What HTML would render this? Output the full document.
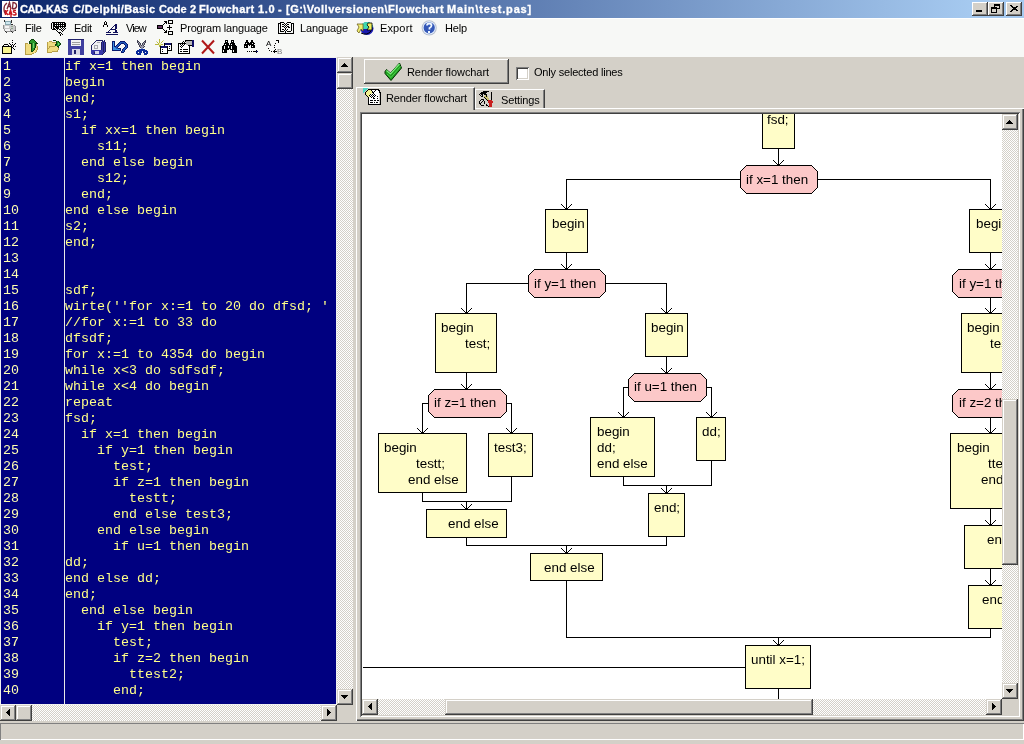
<!DOCTYPE html>
<html><head><meta charset="utf-8"><style>
*{margin:0;padding:0;box-sizing:border-box}
html,body{width:1024px;height:744px;overflow:hidden;background:#D4D0C8;font-family:"Liberation Sans",sans-serif;position:relative}
.a{position:absolute}
#title{left:0;top:0;width:1024px;height:18px;background:linear-gradient(to right,#0A246A 0px,#A6CAF0 975px)}
.tt{top:2px;color:#fff;font-weight:bold;font-size:11px;will-change:transform;-webkit-text-stroke:0.3px #fff;white-space:pre;line-height:14px}
.wbtn{top:2px;width:16px;height:14px;background:#D4D0C8;box-shadow:inset -1px -1px #404040,inset 1px 1px #fff,inset -2px -2px #808080,inset 2px 2px #D4D0C8}
#menubar{left:0;top:18px;width:1024px;height:39px;background:#F7F8F6;border-top:1px solid #fff}
.mt{top:22px;font-size:11px;line-height:13px;color:#000;white-space:pre;will-change:transform}
.lbl{font-size:11px;line-height:13px;color:#000;white-space:pre;will-change:transform}
#editor{left:1px;top:58px;width:335px;height:646px;background:#000080;overflow:hidden;will-change:transform}
#gutline{left:63px;top:0;width:1px;height:646px;background:#E8E8E8}
.code{font-family:"Liberation Mono",monospace;font-size:13.333px;line-height:16px;white-space:pre}
#nums{left:2px;top:1px;color:#FFFFB0}
#lines{left:64px;top:1px;color:#FFFF88}
.track{background-color:#D4D0C8;background-image:repeating-conic-gradient(#fff 0 25%,#D4D0C8 0 50%);background-size:2px 2px}
.sbtn{width:16px;height:16px;background:#D4D0C8;box-shadow:inset -1px -1px #404040,inset 1px 1px #D4D0C8,inset -2px -2px #808080,inset 2px 2px #fff}
#status{left:0;top:723px;width:1024px;height:17px;box-shadow:inset 1px 1px #808080,inset -1px -1px #fff}
</style></head><body>
<div id="title" class="a"></div>
<div class="a tt" style="left:20.0px;letter-spacing:-0.383px">CAD-KAS</div>
<div class="a tt" style="left:72.9px;letter-spacing:0.385px">C/Delphi/Basic</div>
<div class="a tt" style="left:158.7px;letter-spacing:0.033px">Code</div>
<div class="a tt" style="left:189.7px;letter-spacing:0.3px">2</div>
<div class="a tt" style="left:199.0px;letter-spacing:0.387px">Flowchart</div>
<div class="a tt" style="left:257.7px;letter-spacing:0.65px">1.0</div>
<div class="a tt" style="left:277.8px;letter-spacing:1.1px">-</div>
<div class="a tt" style="left:286.0px;letter-spacing:0.481px">[G:\Vollversionen\Flowchart</div>
<div class="a tt" style="left:446.9px;letter-spacing:0.838px">Main\test.pas]</div>
<div class="a wbtn" style="left:972px"><svg class="a" style="left:4px;top:8px;will-change:transform" width="6" height="2" viewBox="0 0 6 2" shape-rendering="crispEdges"><rect x="0" y="0" width="6" height="2" fill="#000"/></svg></div>
<div class="a wbtn" style="left:988px"><svg class="a" style="left:3px;top:2px;will-change:transform" width="9" height="9" viewBox="0 0 9 9" shape-rendering="crispEdges"><rect x="3" y="0" width="6" height="1" fill="#000"/><rect x="3" y="1" width="6" height="1" fill="#000"/><rect x="3" y="0" width="1" height="5" fill="#000"/><rect x="8" y="0" width="1" height="5" fill="#000"/><rect x="6" y="4" width="3" height="1" fill="#000"/><rect x="0" y="3" width="6" height="1" fill="#000"/><rect x="0" y="4" width="6" height="1" fill="#000"/><rect x="0" y="3" width="1" height="6" fill="#000"/><rect x="5" y="3" width="1" height="6" fill="#000"/><rect x="0" y="8" width="6" height="1" fill="#000"/></svg></div>
<div class="a wbtn" style="left:1006px"><svg class="a" style="left:4px;top:3px;will-change:transform" width="9" height="7" viewBox="0 0 9 7" shape-rendering="crispEdges"><path d="M0.5 0.5 L7.5 6.5 M7.5 0.5 L0.5 6.5 M1.5 0.5 L8.5 6.5 M8.5 0.5 L1.5 6.5" stroke="#000" stroke-width="1" shape-rendering="crispEdges"/></svg></div>
<div id="menubar" class="a"></div>
<div class="a mt" style="left:24.8px;letter-spacing:-0.3px">File</div>
<div class="a mt" style="left:73.7px;letter-spacing:-0.267px">Edit</div>
<div class="a mt" style="left:125.8px;letter-spacing:-0.967px">View</div>
<div class="a mt" style="left:179.5px;letter-spacing:-0.173px">Program language</div>
<div class="a mt" style="left:299.9px;letter-spacing:-0.114px">Language</div>
<div class="a mt" style="left:379.5px;letter-spacing:0.14px">Export</div>
<div class="a mt" style="left:444.6px;letter-spacing:-0.167px">Help</div>
<svg class="a" style="left:1px;top:0px;will-change:transform" width="18" height="18" viewBox="0 0 18 18" shape-rendering="crispEdges"><rect x="1" y="1" width="16" height="16" fill="#fff"/><path d="M6 3 Q3 5 3 9 Q3 13 5 14 M6 9 L8.5 2.5 L10 9 M7 6.5 L9.5 6.5 M11.5 9 L12 2.5 Q16 3 15.5 6.5 Q15 9 11.5 9" fill="none" stroke="#802838" stroke-width="1.3" shape-rendering="auto"/><path d="M4.5 10 V15 M4.5 12.5 L7 10 M5 12.5 L7 15 M8 15 L9.5 10 L11 15 M8.5 13.5 H10.5 M15 10.5 Q12 10 12.5 12 Q15.5 12.5 15 14.5 Q13 15.5 12 14.5 M10 13 V17.5" fill="none" stroke="#C81820" stroke-width="1.4" shape-rendering="auto"/></svg>
<svg class="a" style="left:2px;top:20px;will-change:transform" width="16" height="16" viewBox="0 0 16 16" shape-rendering="crispEdges"><rect x="2" y="0" width="1" height="1" fill="#303030"/><rect x="9" y="0" width="1" height="1" fill="#303030"/><rect x="2" y="1" width="1" height="1" fill="#303030"/><rect x="3" y="1" width="6" height="1" fill="#8AA8B0"/><rect x="9" y="1" width="1" height="1" fill="#303030"/><rect x="3" y="2" width="1" height="1" fill="#8AA8B0"/><rect x="4" y="2" width="4" height="1" fill="#D0E8F0"/><rect x="8" y="2" width="1" height="1" fill="#8AA8B0"/><rect x="9" y="2" width="1" height="1" fill="#303030"/><rect x="3" y="3" width="1" height="1" fill="#8AA8B0"/><rect x="4" y="3" width="4" height="1" fill="#D0E8F0"/><rect x="8" y="3" width="1" height="1" fill="#8AA8B0"/><rect x="3" y="4" width="6" height="1" fill="#8AA8B0"/><rect x="9" y="4" width="2" height="1" fill="#303030"/><rect x="1" y="5" width="1" height="1" fill="#909090"/><rect x="2" y="5" width="10" height="1" fill="#C8C8C8"/><rect x="12" y="5" width="1" height="1" fill="#909090"/><rect x="1" y="6" width="1" height="1" fill="#909090"/><rect x="2" y="6" width="1" height="1" fill="#C8C8C8"/><rect x="3" y="6" width="4" height="1" fill="#F4F4F4"/><rect x="7" y="6" width="2" height="1" fill="#C8C8C8"/><rect x="9" y="6" width="2" height="1" fill="#90A890"/><rect x="11" y="6" width="2" height="1" fill="#C8C8C8"/><rect x="13" y="6" width="1" height="1" fill="#909090"/><rect x="1" y="7" width="1" height="1" fill="#909090"/><rect x="2" y="7" width="1" height="1" fill="#C8C8C8"/><rect x="3" y="7" width="4" height="1" fill="#F4F4F4"/><rect x="7" y="7" width="6" height="1" fill="#C8C8C8"/><rect x="13" y="7" width="1" height="1" fill="#909090"/><rect x="1" y="8" width="1" height="1" fill="#909090"/><rect x="2" y="8" width="7" height="1" fill="#C8C8C8"/><rect x="9" y="8" width="2" height="1" fill="#90A890"/><rect x="11" y="8" width="2" height="1" fill="#C8C8C8"/><rect x="13" y="8" width="1" height="1" fill="#909090"/><rect x="2" y="9" width="1" height="1" fill="#909090"/><rect x="3" y="9" width="5" height="1" fill="#F4F4F4"/><rect x="8" y="9" width="1" height="1" fill="#909090"/><rect x="9" y="9" width="4" height="1" fill="#C8C8C8"/><rect x="13" y="9" width="1" height="1" fill="#909090"/><rect x="2" y="10" width="1" height="1" fill="#909090"/><rect x="3" y="10" width="5" height="1" fill="#F4F4F4"/><rect x="8" y="10" width="1" height="1" fill="#909090"/><rect x="9" y="10" width="3" height="1" fill="#C8C8C8"/><rect x="12" y="10" width="1" height="1" fill="#909090"/><rect x="13" y="10" width="1" height="1" fill="#303030"/><rect x="3" y="11" width="1" height="1" fill="#303030"/><rect x="4" y="11" width="5" height="1" fill="#909090"/><rect x="9" y="11" width="1" height="1" fill="#303030"/><rect x="10" y="11" width="2" height="1" fill="#909090"/><rect x="4" y="12" width="1" height="1" fill="#303030"/><rect x="10" y="12" width="1" height="1" fill="#303030"/></svg>
<svg class="a" style="left:50px;top:20px;will-change:transform" width="16" height="16" viewBox="0 0 16 16" shape-rendering="crispEdges"><rect x="2" y="2" width="13" height="1" fill="#000"/><rect x="1" y="3" width="1" height="1" fill="#000"/><rect x="3" y="3" width="2" height="1" fill="#000"/><rect x="6" y="3" width="1" height="1" fill="#000"/><rect x="8" y="3" width="1" height="1" fill="#000"/><rect x="10" y="3" width="1" height="1" fill="#000"/><rect x="12" y="3" width="1" height="1" fill="#000"/><rect x="14" y="3" width="2" height="1" fill="#000"/><rect x="1" y="4" width="1" height="1" fill="#000"/><rect x="3" y="4" width="13" height="1" fill="#000"/><rect x="1" y="5" width="1" height="1" fill="#000"/><rect x="3" y="5" width="2" height="1" fill="#000"/><rect x="6" y="5" width="1" height="1" fill="#000"/><rect x="8" y="5" width="1" height="1" fill="#000"/><rect x="10" y="5" width="1" height="1" fill="#000"/><rect x="12" y="5" width="1" height="1" fill="#000"/><rect x="14" y="5" width="2" height="1" fill="#000"/><rect x="1" y="6" width="1" height="1" fill="#000"/><rect x="3" y="6" width="13" height="1" fill="#000"/><rect x="1" y="7" width="1" height="1" fill="#000"/><rect x="3" y="7" width="1" height="1" fill="#000"/><rect x="5" y="7" width="4" height="1" fill="#000"/><rect x="10" y="7" width="1" height="1" fill="#000"/><rect x="12" y="7" width="1" height="1" fill="#000"/><rect x="14" y="7" width="1" height="1" fill="#000"/><rect x="1" y="8" width="1" height="1" fill="#000"/><rect x="3" y="8" width="2" height="1" fill="#000"/><rect x="6" y="8" width="3" height="1" fill="#000"/><rect x="11" y="8" width="1" height="1" fill="#000"/><rect x="13" y="8" width="1" height="1" fill="#000"/><rect x="15" y="8" width="1" height="1" fill="#000"/><rect x="2" y="9" width="4" height="1" fill="#000"/><rect x="7" y="9" width="1" height="1" fill="#000"/><rect x="9" y="9" width="2" height="1" fill="#000"/><rect x="12" y="9" width="1" height="1" fill="#000"/><rect x="14" y="9" width="1" height="1" fill="#000"/><rect x="6" y="10" width="1" height="1" fill="#000"/><rect x="11" y="10" width="1" height="1" fill="#000"/><rect x="13" y="10" width="1" height="1" fill="#000"/><rect x="7" y="11" width="1" height="1" fill="#000"/><rect x="12" y="11" width="1" height="1" fill="#000"/><rect x="8" y="12" width="3" height="1" fill="#000"/><rect x="9" y="13" width="1" height="1" fill="#000"/><rect x="11" y="13" width="1" height="1" fill="#000"/><rect x="10" y="14" width="1" height="1" fill="#000"/><rect x="12" y="14" width="1" height="1" fill="#000"/><rect x="10" y="15" width="1" height="1" fill="#000"/></svg>
<svg class="a" style="left:102px;top:19px;will-change:transform" width="18" height="18" viewBox="0 0 18 18" shape-rendering="crispEdges"><rect x="3" y="2" width="1" height="1" fill="#000"/><rect x="2" y="3" width="1" height="1" fill="#000"/><rect x="4" y="3" width="1" height="1" fill="#000"/><rect x="2" y="4" width="1" height="1" fill="#000"/><rect x="4" y="4" width="1" height="1" fill="#000"/><rect x="2" y="5" width="3" height="1" fill="#000"/><rect x="1" y="6" width="1" height="1" fill="#000"/><rect x="5" y="6" width="1" height="1" fill="#000"/><rect x="1" y="7" width="1" height="1" fill="#000"/><rect x="5" y="7" width="1" height="1" fill="#000"/><rect x="13" y="5" width="2" height="1" fill="#10105A"/><rect x="12" y="6" width="3" height="1" fill="#10105A"/><rect x="11" y="7" width="1" height="1" fill="#10105A"/><rect x="13" y="7" width="2" height="1" fill="#10105A"/><rect x="10" y="8" width="1" height="1" fill="#10105A"/><rect x="13" y="8" width="2" height="1" fill="#10105A"/><rect x="9" y="9" width="1" height="1" fill="#10105A"/><rect x="13" y="9" width="2" height="1" fill="#10105A"/><rect x="8" y="10" width="6" height="1" fill="#10105A"/><rect x="7" y="11" width="1" height="1" fill="#10105A"/><rect x="13" y="11" width="2" height="1" fill="#10105A"/><rect x="6" y="12" width="1" height="1" fill="#10105A"/><rect x="13" y="12" width="2" height="1" fill="#10105A"/><rect x="4" y="13" width="5" height="1" fill="#10105A"/><rect x="11" y="13" width="5" height="1" fill="#10105A"/><rect x="4" y="15" width="12" height="1" fill="#10105A"/></svg>
<svg class="a" style="left:155px;top:19px;will-change:transform" width="20" height="18" viewBox="0 0 20 18" shape-rendering="crispEdges"><rect x="13" y="1" width="5" height="1" fill="#000"/><rect x="9" y="2" width="3" height="1" fill="#000"/><rect x="13" y="2" width="1" height="1" fill="#000"/><rect x="17" y="2" width="1" height="1" fill="#000"/><rect x="10" y="3" width="2" height="1" fill="#000"/><rect x="13" y="3" width="1" height="1" fill="#000"/><rect x="17" y="3" width="1" height="1" fill="#000"/><rect x="9" y="4" width="1" height="1" fill="#000"/><rect x="11" y="4" width="1" height="1" fill="#000"/><rect x="13" y="4" width="5" height="1" fill="#000"/><rect x="8" y="5" width="1" height="1" fill="#000"/><rect x="2" y="6" width="6" height="1" fill="#000"/><rect x="14" y="6" width="1" height="1" fill="#000"/><rect x="2" y="7" width="1" height="1" fill="#000"/><rect x="3" y="7" width="4" height="1" fill="#603060"/><rect x="7" y="7" width="1" height="1" fill="#000"/><rect x="14" y="7" width="1" height="1" fill="#000"/><rect x="2" y="8" width="1" height="1" fill="#000"/><rect x="3" y="8" width="4" height="1" fill="#603060"/><rect x="7" y="8" width="1" height="1" fill="#000"/><rect x="12" y="8" width="5" height="1" fill="#000"/><rect x="2" y="9" width="6" height="1" fill="#000"/><rect x="14" y="9" width="1" height="1" fill="#000"/><rect x="8" y="10" width="1" height="1" fill="#000"/><rect x="14" y="10" width="1" height="1" fill="#000"/><rect x="9" y="11" width="1" height="1" fill="#000"/><rect x="11" y="11" width="1" height="1" fill="#000"/><rect x="10" y="12" width="2" height="1" fill="#000"/><rect x="13" y="12" width="5" height="1" fill="#000"/><rect x="9" y="13" width="3" height="1" fill="#000"/><rect x="13" y="13" width="1" height="1" fill="#000"/><rect x="17" y="13" width="1" height="1" fill="#000"/><rect x="13" y="14" width="1" height="1" fill="#000"/><rect x="17" y="14" width="1" height="1" fill="#000"/><rect x="13" y="15" width="5" height="1" fill="#000"/></svg>
<svg class="a" style="left:278px;top:20px;will-change:transform" width="16" height="16" viewBox="0 0 16 16" shape-rendering="crispEdges"><rect x="2" y="2" width="4" height="1" fill="#000"/><rect x="9" y="2" width="4" height="1" fill="#000"/><rect x="0" y="3" width="3" height="1" fill="#000"/><rect x="6" y="3" width="1" height="1" fill="#000"/><rect x="8" y="3" width="1" height="1" fill="#000"/><rect x="13" y="3" width="3" height="1" fill="#000"/><rect x="0" y="4" width="1" height="1" fill="#000"/><rect x="2" y="4" width="1" height="1" fill="#000"/><rect x="4" y="4" width="2" height="1" fill="#000"/><rect x="7" y="4" width="1" height="1" fill="#000"/><rect x="9" y="4" width="2" height="1" fill="#000"/><rect x="13" y="4" width="1" height="1" fill="#000"/><rect x="15" y="4" width="1" height="1" fill="#000"/><rect x="0" y="5" width="1" height="1" fill="#000"/><rect x="2" y="5" width="1" height="1" fill="#000"/><rect x="6" y="5" width="1" height="1" fill="#000"/><rect x="8" y="5" width="1" height="1" fill="#000"/><rect x="13" y="5" width="1" height="1" fill="#000"/><rect x="15" y="5" width="1" height="1" fill="#000"/><rect x="0" y="6" width="1" height="1" fill="#000"/><rect x="2" y="6" width="1" height="1" fill="#000"/><rect x="4" y="6" width="2" height="1" fill="#000"/><rect x="7" y="6" width="1" height="1" fill="#000"/><rect x="9" y="6" width="2" height="1" fill="#000"/><rect x="13" y="6" width="1" height="1" fill="#000"/><rect x="15" y="6" width="1" height="1" fill="#000"/><rect x="0" y="7" width="1" height="1" fill="#000"/><rect x="2" y="7" width="1" height="1" fill="#000"/><rect x="6" y="7" width="1" height="1" fill="#000"/><rect x="8" y="7" width="1" height="1" fill="#000"/><rect x="10" y="7" width="2" height="1" fill="#000"/><rect x="13" y="7" width="1" height="1" fill="#000"/><rect x="15" y="7" width="1" height="1" fill="#000"/><rect x="0" y="8" width="1" height="1" fill="#000"/><rect x="2" y="8" width="1" height="1" fill="#000"/><rect x="7" y="8" width="1" height="1" fill="#000"/><rect x="13" y="8" width="1" height="1" fill="#000"/><rect x="15" y="8" width="1" height="1" fill="#000"/><rect x="0" y="9" width="1" height="1" fill="#000"/><rect x="2" y="9" width="1" height="1" fill="#000"/><rect x="4" y="9" width="2" height="1" fill="#000"/><rect x="7" y="9" width="1" height="1" fill="#000"/><rect x="9" y="9" width="1" height="1" fill="#000"/><rect x="13" y="9" width="1" height="1" fill="#000"/><rect x="15" y="9" width="1" height="1" fill="#000"/><rect x="0" y="10" width="1" height="1" fill="#000"/><rect x="2" y="10" width="1" height="1" fill="#000"/><rect x="6" y="10" width="1" height="1" fill="#000"/><rect x="8" y="10" width="1" height="1" fill="#000"/><rect x="13" y="10" width="1" height="1" fill="#000"/><rect x="15" y="10" width="1" height="1" fill="#000"/><rect x="0" y="11" width="1" height="1" fill="#000"/><rect x="2" y="11" width="4" height="1" fill="#000"/><rect x="7" y="11" width="1" height="1" fill="#000"/><rect x="9" y="11" width="4" height="1" fill="#000"/><rect x="15" y="11" width="1" height="1" fill="#000"/><rect x="0" y="12" width="1" height="1" fill="#000"/><rect x="7" y="12" width="1" height="1" fill="#000"/><rect x="15" y="12" width="1" height="1" fill="#000"/><rect x="0" y="13" width="16" height="1" fill="#000"/></svg>
<svg class="a" style="left:356px;top:19px;will-change:transform" width="18" height="18" viewBox="0 0 18 18" shape-rendering="crispEdges"><circle cx="11" cy="9.5" r="6.5" fill="#1818B0" shape-rendering="auto"/><path d="M5 8 Q6 3 11 3 Q16 3 17 8 L13 10 L10 10 L6 10 Z" fill="#40D8B0" shape-rendering="auto"/><path d="M12 4 L16 4 L16 11 L11 11 L13 8 L11 6 Z" fill="#F0F060" stroke="#000" stroke-width="0.8" shape-rendering="auto"/><path d="M1 5 L7 5 L7 12 L5 10 L3 14 L1 12 L3 8 Z" fill="#F0F070" stroke="#706020" stroke-width="0.8" shape-rendering="auto"/><path d="M5 14 Q11 17 15 12" fill="none" stroke="#000" stroke-width="1" shape-rendering="auto"/></svg>
<svg class="a" style="left:420px;top:19px;will-change:transform" width="18" height="18" viewBox="0 0 18 18" shape-rendering="crispEdges"><circle cx="9.2" cy="8.8" r="7.6" fill="#B8C0D0" shape-rendering="auto"/><circle cx="9.2" cy="8.8" r="6.6" fill="#E4F0FF" shape-rendering="auto"/><circle cx="9.2" cy="8.8" r="5.6" fill="#3458B8" shape-rendering="auto"/><path d="M7 6.5 Q7 4.5 9.3 4.5 Q11.5 4.5 11.5 6.5 Q11.5 8 9.5 9 L9.5 10.5" fill="none" stroke="#F0F8FF" stroke-width="1.8" shape-rendering="auto"/><rect x="8" y="12" width="2" height="2" fill="#F0F8FF"/></svg>
<svg class="a" style="left:1px;top:39px;will-change:transform" width="18" height="18" viewBox="0 0 18 18" shape-rendering="crispEdges"><rect x="11" y="1" width="1" height="1" fill="#000"/><rect x="11" y="3" width="1" height="1" fill="#000"/><rect x="8" y="4" width="1" height="1" fill="#000"/><rect x="14" y="4" width="1" height="1" fill="#000"/><rect x="3" y="5" width="4" height="1" fill="#000"/><rect x="9" y="5" width="1" height="1" fill="#000"/><rect x="11" y="5" width="1" height="1" fill="#000"/><rect x="13" y="5" width="1" height="1" fill="#000"/><rect x="2" y="6" width="1" height="1" fill="#000"/><rect x="7" y="6" width="1" height="1" fill="#000"/><rect x="10" y="6" width="1" height="1" fill="#000"/><rect x="12" y="6" width="1" height="1" fill="#000"/><rect x="1" y="7" width="10" height="1" fill="#000"/><rect x="12" y="7" width="1" height="1" fill="#000"/><rect x="14" y="7" width="1" height="1" fill="#000"/><rect x="1" y="8" width="1" height="1" fill="#000"/><rect x="2" y="8" width="8" height="1" fill="#F8F490"/><rect x="10" y="8" width="2" height="1" fill="#000"/><rect x="1" y="9" width="1" height="1" fill="#000"/><rect x="2" y="9" width="8" height="1" fill="#F8F490"/><rect x="10" y="9" width="1" height="1" fill="#000"/><rect x="12" y="9" width="1" height="1" fill="#000"/><rect x="1" y="10" width="1" height="1" fill="#000"/><rect x="2" y="10" width="8" height="1" fill="#F8F490"/><rect x="10" y="10" width="1" height="1" fill="#000"/><rect x="13" y="10" width="1" height="1" fill="#000"/><rect x="1" y="11" width="1" height="1" fill="#000"/><rect x="2" y="11" width="8" height="1" fill="#F8F490"/><rect x="10" y="11" width="1" height="1" fill="#000"/><rect x="1" y="12" width="1" height="1" fill="#000"/><rect x="2" y="12" width="8" height="1" fill="#F8F490"/><rect x="10" y="12" width="1" height="1" fill="#000"/><rect x="1" y="13" width="1" height="1" fill="#000"/><rect x="2" y="13" width="8" height="1" fill="#F8F490"/><rect x="10" y="13" width="1" height="1" fill="#000"/><rect x="1" y="14" width="10" height="1" fill="#000"/></svg>
<svg class="a" style="left:23px;top:39px;will-change:transform" width="18" height="18" viewBox="0 0 18 18" shape-rendering="crispEdges"><rect x="8" y="0" width="3" height="1" fill="#0A400A"/><rect x="7" y="1" width="1" height="1" fill="#0A400A"/><rect x="8" y="1" width="3" height="1" fill="#289828"/><rect x="11" y="1" width="1" height="1" fill="#0A400A"/><rect x="6" y="2" width="1" height="1" fill="#0A400A"/><rect x="7" y="2" width="5" height="1" fill="#289828"/><rect x="12" y="2" width="1" height="1" fill="#0A400A"/><rect x="6" y="3" width="1" height="1" fill="#0A400A"/><rect x="7" y="3" width="6" height="1" fill="#289828"/><rect x="13" y="3" width="1" height="1" fill="#0A400A"/><rect x="2" y="4" width="3" height="1" fill="#B8A048"/><rect x="6" y="4" width="3" height="1" fill="#0A400A"/><rect x="9" y="4" width="1" height="1" fill="#289828"/><rect x="10" y="4" width="1" height="1" fill="#70D070"/><rect x="11" y="4" width="1" height="1" fill="#289828"/><rect x="12" y="4" width="3" height="1" fill="#0A400A"/><rect x="2" y="5" width="1" height="1" fill="#B8A048"/><rect x="3" y="5" width="5" height="1" fill="#F0DC80"/><rect x="8" y="5" width="1" height="1" fill="#0A400A"/><rect x="9" y="5" width="1" height="1" fill="#289828"/><rect x="10" y="5" width="1" height="1" fill="#70D070"/><rect x="11" y="5" width="1" height="1" fill="#289828"/><rect x="12" y="5" width="1" height="1" fill="#0A400A"/><rect x="13" y="5" width="1" height="1" fill="#B8A048"/><rect x="2" y="6" width="1" height="1" fill="#B8A048"/><rect x="3" y="6" width="5" height="1" fill="#F0DC80"/><rect x="8" y="6" width="1" height="1" fill="#0A400A"/><rect x="9" y="6" width="1" height="1" fill="#289828"/><rect x="10" y="6" width="1" height="1" fill="#70D070"/><rect x="11" y="6" width="1" height="1" fill="#289828"/><rect x="12" y="6" width="1" height="1" fill="#0A400A"/><rect x="13" y="6" width="1" height="1" fill="#B8A048"/><rect x="2" y="7" width="1" height="1" fill="#B8A048"/><rect x="3" y="7" width="5" height="1" fill="#F0DC80"/><rect x="8" y="7" width="1" height="1" fill="#0A400A"/><rect x="9" y="7" width="1" height="1" fill="#289828"/><rect x="10" y="7" width="1" height="1" fill="#70D070"/><rect x="11" y="7" width="1" height="1" fill="#289828"/><rect x="12" y="7" width="1" height="1" fill="#0A400A"/><rect x="13" y="7" width="1" height="1" fill="#F0DC80"/><rect x="14" y="7" width="1" height="1" fill="#B8A048"/><rect x="2" y="8" width="1" height="1" fill="#B8A048"/><rect x="3" y="8" width="5" height="1" fill="#F0DC80"/><rect x="8" y="8" width="1" height="1" fill="#0A400A"/><rect x="9" y="8" width="1" height="1" fill="#289828"/><rect x="10" y="8" width="1" height="1" fill="#70D070"/><rect x="11" y="8" width="1" height="1" fill="#289828"/><rect x="12" y="8" width="1" height="1" fill="#0A400A"/><rect x="13" y="8" width="1" height="1" fill="#F0DC80"/><rect x="14" y="8" width="1" height="1" fill="#B8A048"/><rect x="2" y="9" width="1" height="1" fill="#B8A048"/><rect x="3" y="9" width="5" height="1" fill="#F0DC80"/><rect x="8" y="9" width="1" height="1" fill="#0A400A"/><rect x="9" y="9" width="2" height="1" fill="#289828"/><rect x="11" y="9" width="1" height="1" fill="#0A400A"/><rect x="12" y="9" width="2" height="1" fill="#F0DC80"/><rect x="14" y="9" width="1" height="1" fill="#B8A048"/><rect x="2" y="10" width="1" height="1" fill="#B8A048"/><rect x="3" y="10" width="5" height="1" fill="#F0DC80"/><rect x="8" y="10" width="1" height="1" fill="#0A400A"/><rect x="9" y="10" width="2" height="1" fill="#289828"/><rect x="11" y="10" width="1" height="1" fill="#0A400A"/><rect x="12" y="10" width="2" height="1" fill="#F0DC80"/><rect x="14" y="10" width="1" height="1" fill="#B8A048"/><rect x="2" y="11" width="1" height="1" fill="#B8A048"/><rect x="3" y="11" width="5" height="1" fill="#F0DC80"/><rect x="8" y="11" width="1" height="1" fill="#0A400A"/><rect x="9" y="11" width="1" height="1" fill="#289828"/><rect x="10" y="11" width="1" height="1" fill="#0A400A"/><rect x="11" y="11" width="2" height="1" fill="#F0DC80"/><rect x="13" y="11" width="1" height="1" fill="#B8A048"/><rect x="2" y="12" width="1" height="1" fill="#B8A048"/><rect x="3" y="12" width="5" height="1" fill="#F0DC80"/><rect x="8" y="12" width="2" height="1" fill="#0A400A"/><rect x="10" y="12" width="3" height="1" fill="#F0DC80"/><rect x="13" y="12" width="1" height="1" fill="#B8A048"/><rect x="2" y="13" width="1" height="1" fill="#B8A048"/><rect x="3" y="13" width="9" height="1" fill="#F0DC80"/><rect x="12" y="13" width="1" height="1" fill="#B8A048"/><rect x="2" y="14" width="1" height="1" fill="#B8A048"/><rect x="3" y="14" width="6" height="1" fill="#F0DC80"/><rect x="9" y="14" width="2" height="1" fill="#B8A048"/><rect x="2" y="15" width="7" height="1" fill="#B8A048"/></svg>
<svg class="a" style="left:45px;top:39px;will-change:transform" width="16" height="16" viewBox="0 0 16 16" shape-rendering="crispEdges"><rect x="8" y="1" width="3" height="1" fill="#0A400A"/><rect x="4" y="2" width="3" height="1" fill="#B8A048"/><rect x="11" y="2" width="1" height="1" fill="#0A400A"/><rect x="12" y="2" width="1" height="1" fill="#289828"/><rect x="13" y="2" width="1" height="1" fill="#0A400A"/><rect x="2" y="3" width="1" height="1" fill="#B8A048"/><rect x="3" y="3" width="4" height="1" fill="#F0DC80"/><rect x="7" y="3" width="4" height="1" fill="#B8A048"/><rect x="11" y="3" width="1" height="1" fill="#0A400A"/><rect x="12" y="3" width="2" height="1" fill="#289828"/><rect x="14" y="3" width="1" height="1" fill="#0A400A"/><rect x="2" y="4" width="1" height="1" fill="#B8A048"/><rect x="3" y="4" width="8" height="1" fill="#F0DC80"/><rect x="11" y="4" width="1" height="1" fill="#0A400A"/><rect x="12" y="4" width="1" height="1" fill="#289828"/><rect x="13" y="4" width="1" height="1" fill="#70D070"/><rect x="14" y="4" width="1" height="1" fill="#289828"/><rect x="15" y="4" width="1" height="1" fill="#0A400A"/><rect x="2" y="5" width="1" height="1" fill="#B8A048"/><rect x="3" y="5" width="7" height="1" fill="#F0DC80"/><rect x="10" y="5" width="2" height="1" fill="#0A400A"/><rect x="12" y="5" width="1" height="1" fill="#289828"/><rect x="13" y="5" width="1" height="1" fill="#70D070"/><rect x="14" y="5" width="1" height="1" fill="#289828"/><rect x="15" y="5" width="1" height="1" fill="#0A400A"/><rect x="2" y="6" width="1" height="1" fill="#B8A048"/><rect x="3" y="6" width="7" height="1" fill="#F0DC80"/><rect x="10" y="6" width="1" height="1" fill="#0A400A"/><rect x="11" y="6" width="3" height="1" fill="#289828"/><rect x="14" y="6" width="1" height="1" fill="#0A400A"/><rect x="2" y="7" width="1" height="1" fill="#B8A048"/><rect x="3" y="7" width="1" height="1" fill="#F0DC80"/><rect x="4" y="7" width="6" height="1" fill="#B8A048"/><rect x="10" y="7" width="2" height="1" fill="#F0DC80"/><rect x="12" y="7" width="2" height="1" fill="#0A400A"/><rect x="2" y="8" width="1" height="1" fill="#B8A048"/><rect x="3" y="8" width="1" height="1" fill="#F0DC80"/><rect x="4" y="8" width="1" height="1" fill="#B8A048"/><rect x="5" y="8" width="8" height="1" fill="#F0DC80"/><rect x="13" y="8" width="1" height="1" fill="#0A400A"/><rect x="2" y="9" width="2" height="1" fill="#B8A048"/><rect x="4" y="9" width="9" height="1" fill="#F0DC80"/><rect x="13" y="9" width="1" height="1" fill="#B8A048"/><rect x="2" y="10" width="1" height="1" fill="#B8A048"/><rect x="3" y="10" width="10" height="1" fill="#F0DC80"/><rect x="13" y="10" width="1" height="1" fill="#B8A048"/><rect x="2" y="11" width="1" height="1" fill="#B8A048"/><rect x="3" y="11" width="9" height="1" fill="#F0DC80"/><rect x="12" y="11" width="1" height="1" fill="#B8A048"/><rect x="2" y="12" width="1" height="1" fill="#B8A048"/><rect x="3" y="12" width="4" height="1" fill="#F0DC80"/><rect x="7" y="12" width="6" height="1" fill="#B8A048"/><rect x="2" y="13" width="5" height="1" fill="#B8A048"/></svg>
<svg class="a" style="left:68px;top:39px;will-change:transform" width="16" height="16" viewBox="0 0 16 16" shape-rendering="crispEdges"><rect x="0" y="0" width="16" height="16" fill="#4040A0"/><rect x="0" y="0" width="16" height="1" fill="#20206A"/><rect x="3" y="1" width="10" height="6" fill="#F4F4F4"/><rect x="4" y="3" width="8" height="1" fill="#A0A0A0"/><rect x="4" y="5" width="8" height="1" fill="#A0A0A0"/><rect x="4" y="10" width="8" height="6" fill="#D8D8E8"/><rect x="6" y="11" width="2" height="4" fill="#20206A"/></svg>
<svg class="a" style="left:89px;top:39px;will-change:transform" width="18" height="18" viewBox="0 0 18 18" shape-rendering="crispEdges"><rect x="7" y="1" width="7" height="1" fill="#202060"/><rect x="15" y="1" width="1" height="1" fill="#202060"/><rect x="6" y="2" width="1" height="1" fill="#202060"/><rect x="7" y="2" width="6" height="1" fill="#F0F0F4"/><rect x="13" y="2" width="1" height="1" fill="#202060"/><rect x="14" y="2" width="1" height="1" fill="#3838A8"/><rect x="15" y="2" width="1" height="1" fill="#202060"/><rect x="5" y="3" width="1" height="1" fill="#202060"/><rect x="6" y="3" width="2" height="1" fill="#F0F0F4"/><rect x="8" y="3" width="3" height="1" fill="#A8A8B0"/><rect x="11" y="3" width="1" height="1" fill="#F0F0F4"/><rect x="12" y="3" width="1" height="1" fill="#202060"/><rect x="13" y="3" width="1" height="1" fill="#3838A8"/><rect x="14" y="3" width="1" height="1" fill="#202060"/><rect x="15" y="3" width="1" height="1" fill="#3838A8"/><rect x="16" y="3" width="1" height="1" fill="#202060"/><rect x="4" y="4" width="1" height="1" fill="#202060"/><rect x="5" y="4" width="7" height="1" fill="#F0F0F4"/><rect x="12" y="4" width="1" height="1" fill="#202060"/><rect x="13" y="4" width="1" height="1" fill="#3838A8"/><rect x="14" y="4" width="1" height="1" fill="#202060"/><rect x="15" y="4" width="1" height="1" fill="#3838A8"/><rect x="16" y="4" width="1" height="1" fill="#202060"/><rect x="3" y="5" width="1" height="1" fill="#202060"/><rect x="4" y="5" width="8" height="1" fill="#F0F0F4"/><rect x="12" y="5" width="1" height="1" fill="#202060"/><rect x="13" y="5" width="1" height="1" fill="#3838A8"/><rect x="14" y="5" width="1" height="1" fill="#202060"/><rect x="15" y="5" width="1" height="1" fill="#3838A8"/><rect x="16" y="5" width="1" height="1" fill="#202060"/><rect x="2" y="6" width="1" height="1" fill="#202060"/><rect x="3" y="6" width="2" height="1" fill="#F0F0F4"/><rect x="5" y="6" width="4" height="1" fill="#A8A8B0"/><rect x="9" y="6" width="3" height="1" fill="#F0F0F4"/><rect x="12" y="6" width="1" height="1" fill="#202060"/><rect x="13" y="6" width="1" height="1" fill="#3838A8"/><rect x="14" y="6" width="1" height="1" fill="#202060"/><rect x="15" y="6" width="1" height="1" fill="#3838A8"/><rect x="16" y="6" width="1" height="1" fill="#202060"/><rect x="2" y="7" width="1" height="1" fill="#202060"/><rect x="3" y="7" width="2" height="1" fill="#F0F0F4"/><rect x="5" y="7" width="1" height="1" fill="#A8A8B0"/><rect x="6" y="7" width="2" height="1" fill="#F0F0F4"/><rect x="8" y="7" width="1" height="1" fill="#A8A8B0"/><rect x="9" y="7" width="3" height="1" fill="#F0F0F4"/><rect x="12" y="7" width="1" height="1" fill="#202060"/><rect x="13" y="7" width="1" height="1" fill="#3838A8"/><rect x="14" y="7" width="1" height="1" fill="#202060"/><rect x="15" y="7" width="1" height="1" fill="#3838A8"/><rect x="16" y="7" width="1" height="1" fill="#202060"/><rect x="2" y="8" width="1" height="1" fill="#202060"/><rect x="3" y="8" width="2" height="1" fill="#F0F0F4"/><rect x="5" y="8" width="1" height="1" fill="#A8A8B0"/><rect x="6" y="8" width="2" height="1" fill="#F0F0F4"/><rect x="8" y="8" width="1" height="1" fill="#A8A8B0"/><rect x="9" y="8" width="3" height="1" fill="#F0F0F4"/><rect x="12" y="8" width="1" height="1" fill="#202060"/><rect x="13" y="8" width="1" height="1" fill="#3838A8"/><rect x="14" y="8" width="1" height="1" fill="#202060"/><rect x="15" y="8" width="1" height="1" fill="#3838A8"/><rect x="16" y="8" width="1" height="1" fill="#202060"/><rect x="2" y="9" width="1" height="1" fill="#202060"/><rect x="3" y="9" width="2" height="1" fill="#F0F0F4"/><rect x="5" y="9" width="4" height="1" fill="#A8A8B0"/><rect x="9" y="9" width="3" height="1" fill="#F0F0F4"/><rect x="12" y="9" width="1" height="1" fill="#202060"/><rect x="13" y="9" width="1" height="1" fill="#3838A8"/><rect x="14" y="9" width="1" height="1" fill="#202060"/><rect x="15" y="9" width="1" height="1" fill="#3838A8"/><rect x="16" y="9" width="1" height="1" fill="#202060"/><rect x="2" y="10" width="1" height="1" fill="#202060"/><rect x="3" y="10" width="9" height="1" fill="#F0F0F4"/><rect x="12" y="10" width="1" height="1" fill="#202060"/><rect x="13" y="10" width="1" height="1" fill="#3838A8"/><rect x="14" y="10" width="1" height="1" fill="#202060"/><rect x="15" y="10" width="1" height="1" fill="#3838A8"/><rect x="16" y="10" width="1" height="1" fill="#202060"/><rect x="2" y="11" width="12" height="1" fill="#3838A8"/><rect x="14" y="11" width="1" height="1" fill="#202060"/><rect x="15" y="11" width="1" height="1" fill="#3838A8"/><rect x="16" y="11" width="1" height="1" fill="#202060"/><rect x="2" y="12" width="4" height="1" fill="#3838A8"/><rect x="6" y="12" width="4" height="1" fill="#D8D8F0"/><rect x="10" y="12" width="4" height="1" fill="#3838A8"/><rect x="14" y="12" width="1" height="1" fill="#202060"/><rect x="15" y="12" width="1" height="1" fill="#3838A8"/><rect x="16" y="12" width="1" height="1" fill="#202060"/><rect x="2" y="13" width="3" height="1" fill="#3838A8"/><rect x="5" y="13" width="1" height="1" fill="#202060"/><rect x="6" y="13" width="4" height="1" fill="#D8D8F0"/><rect x="10" y="13" width="5" height="1" fill="#3838A8"/><rect x="15" y="13" width="1" height="1" fill="#202060"/><rect x="2" y="14" width="3" height="1" fill="#3838A8"/><rect x="5" y="14" width="1" height="1" fill="#202060"/><rect x="6" y="14" width="4" height="1" fill="#D8D8F0"/><rect x="10" y="14" width="4" height="1" fill="#3838A8"/><rect x="14" y="14" width="1" height="1" fill="#202060"/><rect x="3" y="15" width="10" height="1" fill="#3838A8"/><rect x="13" y="15" width="1" height="1" fill="#202060"/></svg>
<svg class="a" style="left:111px;top:39px;will-change:transform" width="18" height="18" viewBox="0 0 18 18" shape-rendering="crispEdges"><rect x="1" y="2" width="3" height="1" fill="#0A1A70"/><rect x="9" y="2" width="5" height="1" fill="#0A1A70"/><rect x="1" y="3" width="1" height="1" fill="#0A1A70"/><rect x="2" y="3" width="1" height="1" fill="#3A90E0"/><rect x="3" y="3" width="1" height="1" fill="#0A1A70"/><rect x="8" y="3" width="1" height="1" fill="#0A1A70"/><rect x="9" y="3" width="5" height="1" fill="#2058B8"/><rect x="14" y="3" width="1" height="1" fill="#0A1A70"/><rect x="1" y="4" width="1" height="1" fill="#0A1A70"/><rect x="2" y="4" width="1" height="1" fill="#3A90E0"/><rect x="3" y="4" width="1" height="1" fill="#0A1A70"/><rect x="7" y="4" width="1" height="1" fill="#0A1A70"/><rect x="8" y="4" width="2" height="1" fill="#2058B8"/><rect x="10" y="4" width="3" height="1" fill="#0A1A70"/><rect x="13" y="4" width="2" height="1" fill="#2058B8"/><rect x="15" y="4" width="1" height="1" fill="#0A1A70"/><rect x="1" y="5" width="1" height="1" fill="#0A1A70"/><rect x="2" y="5" width="1" height="1" fill="#3A90E0"/><rect x="3" y="5" width="1" height="1" fill="#0A1A70"/><rect x="6" y="5" width="1" height="1" fill="#0A1A70"/><rect x="7" y="5" width="2" height="1" fill="#2058B8"/><rect x="9" y="5" width="1" height="1" fill="#0A1A70"/><rect x="13" y="5" width="1" height="1" fill="#0A1A70"/><rect x="14" y="5" width="2" height="1" fill="#2058B8"/><rect x="16" y="5" width="1" height="1" fill="#0A1A70"/><rect x="1" y="6" width="1" height="1" fill="#0A1A70"/><rect x="2" y="6" width="1" height="1" fill="#3A90E0"/><rect x="3" y="6" width="1" height="1" fill="#0A1A70"/><rect x="5" y="6" width="1" height="1" fill="#0A1A70"/><rect x="6" y="6" width="2" height="1" fill="#2058B8"/><rect x="8" y="6" width="1" height="1" fill="#0A1A70"/><rect x="14" y="6" width="1" height="1" fill="#0A1A70"/><rect x="15" y="6" width="1" height="1" fill="#2058B8"/><rect x="16" y="6" width="1" height="1" fill="#0A1A70"/><rect x="1" y="7" width="1" height="1" fill="#0A1A70"/><rect x="2" y="7" width="1" height="1" fill="#3A90E0"/><rect x="3" y="7" width="2" height="1" fill="#0A1A70"/><rect x="5" y="7" width="2" height="1" fill="#2058B8"/><rect x="7" y="7" width="1" height="1" fill="#0A1A70"/><rect x="14" y="7" width="1" height="1" fill="#0A1A70"/><rect x="15" y="7" width="1" height="1" fill="#2058B8"/><rect x="16" y="7" width="1" height="1" fill="#0A1A70"/><rect x="1" y="8" width="1" height="1" fill="#0A1A70"/><rect x="2" y="8" width="2" height="1" fill="#3A90E0"/><rect x="4" y="8" width="2" height="1" fill="#2058B8"/><rect x="6" y="8" width="1" height="1" fill="#0A1A70"/><rect x="13" y="8" width="1" height="1" fill="#0A1A70"/><rect x="14" y="8" width="2" height="1" fill="#2058B8"/><rect x="16" y="8" width="1" height="1" fill="#0A1A70"/><rect x="1" y="9" width="1" height="1" fill="#0A1A70"/><rect x="2" y="9" width="3" height="1" fill="#3A90E0"/><rect x="5" y="9" width="2" height="1" fill="#2058B8"/><rect x="7" y="9" width="3" height="1" fill="#0A1A70"/><rect x="12" y="9" width="1" height="1" fill="#0A1A70"/><rect x="13" y="9" width="2" height="1" fill="#2058B8"/><rect x="15" y="9" width="1" height="1" fill="#0A1A70"/><rect x="1" y="10" width="1" height="1" fill="#0A1A70"/><rect x="2" y="10" width="7" height="1" fill="#3A90E0"/><rect x="9" y="10" width="1" height="1" fill="#0A1A70"/><rect x="11" y="10" width="1" height="1" fill="#0A1A70"/><rect x="12" y="10" width="2" height="1" fill="#2058B8"/><rect x="14" y="10" width="1" height="1" fill="#0A1A70"/><rect x="1" y="11" width="9" height="1" fill="#0A1A70"/><rect x="11" y="11" width="1" height="1" fill="#0A1A70"/><rect x="12" y="11" width="1" height="1" fill="#2058B8"/><rect x="13" y="11" width="1" height="1" fill="#0A1A70"/><rect x="10" y="12" width="1" height="1" fill="#0A1A70"/><rect x="11" y="12" width="2" height="1" fill="#2058B8"/><rect x="13" y="12" width="1" height="1" fill="#0A1A70"/><rect x="10" y="13" width="3" height="1" fill="#0A1A70"/></svg>
<svg class="a" style="left:133px;top:39px;will-change:transform" width="18" height="18" viewBox="0 0 18 18" shape-rendering="crispEdges"><rect x="4" y="1" width="1" height="1" fill="#404050"/><rect x="12" y="1" width="1" height="1" fill="#404050"/><rect x="4" y="2" width="2" height="1" fill="#404050"/><rect x="11" y="2" width="2" height="1" fill="#404050"/><rect x="4" y="3" width="1" height="1" fill="#404050"/><rect x="5" y="3" width="1" height="1" fill="#9898A8"/><rect x="6" y="3" width="1" height="1" fill="#404050"/><rect x="10" y="3" width="1" height="1" fill="#404050"/><rect x="11" y="3" width="1" height="1" fill="#9898A8"/><rect x="12" y="3" width="1" height="1" fill="#404050"/><rect x="5" y="4" width="1" height="1" fill="#404050"/><rect x="6" y="4" width="1" height="1" fill="#9898A8"/><rect x="7" y="4" width="1" height="1" fill="#404050"/><rect x="9" y="4" width="1" height="1" fill="#404050"/><rect x="10" y="4" width="1" height="1" fill="#9898A8"/><rect x="11" y="4" width="1" height="1" fill="#404050"/><rect x="5" y="5" width="1" height="1" fill="#404050"/><rect x="6" y="5" width="1" height="1" fill="#9898A8"/><rect x="7" y="5" width="1" height="1" fill="#404050"/><rect x="9" y="5" width="1" height="1" fill="#404050"/><rect x="10" y="5" width="1" height="1" fill="#9898A8"/><rect x="11" y="5" width="1" height="1" fill="#404050"/><rect x="6" y="6" width="1" height="1" fill="#404050"/><rect x="7" y="6" width="1" height="1" fill="#9898A8"/><rect x="8" y="6" width="1" height="1" fill="#404050"/><rect x="9" y="6" width="1" height="1" fill="#9898A8"/><rect x="10" y="6" width="1" height="1" fill="#404050"/><rect x="6" y="7" width="1" height="1" fill="#404050"/><rect x="7" y="7" width="4" height="1" fill="#9898A8"/><rect x="11" y="7" width="1" height="1" fill="#404050"/><rect x="7" y="8" width="1" height="1" fill="#404050"/><rect x="8" y="8" width="2" height="1" fill="#9898A8"/><rect x="10" y="8" width="1" height="1" fill="#404050"/><rect x="8" y="9" width="2" height="1" fill="#8090C0"/><rect x="6" y="10" width="6" height="1" fill="#0A2A9A"/><rect x="4" y="11" width="10" height="1" fill="#0A2A9A"/><rect x="3" y="12" width="6" height="1" fill="#0A2A9A"/><rect x="10" y="12" width="5" height="1" fill="#0A2A9A"/><rect x="3" y="13" width="2" height="1" fill="#0A2A9A"/><rect x="6" y="13" width="3" height="1" fill="#0A2A9A"/><rect x="10" y="13" width="2" height="1" fill="#0A2A9A"/><rect x="13" y="13" width="2" height="1" fill="#0A2A9A"/><rect x="3" y="14" width="5" height="1" fill="#0A2A9A"/><rect x="11" y="14" width="4" height="1" fill="#0A2A9A"/><rect x="4" y="15" width="4" height="1" fill="#0A2A9A"/><rect x="11" y="15" width="3" height="1" fill="#0A2A9A"/></svg>
<svg class="a" style="left:155px;top:39px;will-change:transform" width="18" height="18" viewBox="0 0 18 18" shape-rendering="crispEdges"><path d="M1.5 2.5 L6 7 M8.5 1.5 L5 5 M4.5 0 V8 M0 5.5 H8" stroke="#B8B840" stroke-width="1" shape-rendering="auto"/><rect x="4" y="4" width="2" height="2" fill="#F0F0A0"/><rect x="9" y="4" width="8" height="8" fill="#000"/><rect x="10" y="6" width="6" height="5" fill="#fff"/><rect x="14" y="7" width="1" height="1" fill="#000"/><rect x="14" y="9" width="1" height="1" fill="#000"/><rect x="10" y="4" width="6" height="2" fill="#10106A"/><rect x="5" y="7" width="8" height="8" fill="#000"/><rect x="6" y="9" width="6" height="5" fill="#fff"/><rect x="7" y="10" width="1" height="1" fill="#000"/><rect x="7" y="12" width="1" height="1" fill="#000"/><rect x="6" y="7" width="6" height="2" fill="#10106A"/></svg>
<svg class="a" style="left:177px;top:39px;will-change:transform" width="18" height="18" viewBox="0 0 18 18" shape-rendering="crispEdges"><rect x="1" y="4" width="12" height="11" fill="#000"/><rect x="2" y="5" width="10" height="9" fill="#fff"/><rect x="3" y="10" width="2" height="1" fill="#000"/><rect x="6" y="10" width="5" height="1" fill="#000"/><rect x="3" y="12" width="2" height="1" fill="#000"/><rect x="6" y="12" width="5" height="1" fill="#000"/><rect x="6" y="2" width="1" height="1" fill="#000"/><rect x="8" y="2" width="1" height="1" fill="#000"/><rect x="10" y="2" width="1" height="1" fill="#000"/><rect x="5" y="3" width="1" height="1" fill="#000"/><rect x="7" y="3" width="1" height="1" fill="#000"/><rect x="9" y="3" width="1" height="1" fill="#000"/><rect x="4" y="4" width="1" height="1" fill="#000"/><rect x="6" y="4" width="1" height="1" fill="#000"/><rect x="8" y="4" width="1" height="1" fill="#000"/><rect x="3" y="5" width="1" height="1" fill="#000"/><rect x="5" y="5" width="1" height="1" fill="#000"/><rect x="7" y="5" width="1" height="1" fill="#000"/><rect x="4" y="6" width="1" height="1" fill="#000"/><rect x="6" y="6" width="1" height="1" fill="#000"/><rect x="3" y="7" width="1" height="1" fill="#000"/><rect x="5" y="7" width="1" height="1" fill="#000"/><rect x="4" y="8" width="1" height="1" fill="#000"/><rect x="9" y="2" width="6" height="4" fill="#B8B8B8"/><rect x="8" y="1" width="7" height="1" fill="#000"/><rect x="11" y="6" width="4" height="1" fill="#000"/><rect x="15" y="1" width="2" height="7" fill="#10106A"/></svg>
<svg class="a" style="left:200px;top:39px;will-change:transform" width="16" height="16" viewBox="0 0 16 16" shape-rendering="crispEdges"><path d="M2 1.5 L14 14.5 M14 1.5 L2 14.5" stroke="#B01818" stroke-width="2" shape-rendering="auto"/></svg>
<svg class="a" style="left:222px;top:39px;will-change:transform" width="16" height="16" viewBox="0 0 16 16" shape-rendering="crispEdges"><rect x="3" y="1" width="3" height="1" fill="#000"/><rect x="9" y="1" width="3" height="1" fill="#000"/><rect x="3" y="2" width="1" height="1" fill="#000"/><rect x="5" y="2" width="1" height="1" fill="#000"/><rect x="9" y="2" width="1" height="1" fill="#000"/><rect x="11" y="2" width="1" height="1" fill="#000"/><rect x="3" y="3" width="3" height="1" fill="#000"/><rect x="9" y="3" width="3" height="1" fill="#000"/><rect x="2" y="4" width="5" height="1" fill="#000"/><rect x="8" y="4" width="5" height="1" fill="#000"/><rect x="2" y="5" width="1" height="1" fill="#000"/><rect x="4" y="5" width="3" height="1" fill="#000"/><rect x="8" y="5" width="1" height="1" fill="#000"/><rect x="10" y="5" width="3" height="1" fill="#000"/><rect x="1" y="6" width="13" height="1" fill="#000"/><rect x="0" y="7" width="2" height="1" fill="#000"/><rect x="3" y="7" width="3" height="1" fill="#000"/><rect x="7" y="7" width="2" height="1" fill="#000"/><rect x="10" y="7" width="5" height="1" fill="#000"/><rect x="0" y="8" width="2" height="1" fill="#000"/><rect x="3" y="8" width="3" height="1" fill="#000"/><rect x="7" y="8" width="2" height="1" fill="#000"/><rect x="10" y="8" width="5" height="1" fill="#000"/><rect x="0" y="9" width="2" height="1" fill="#000"/><rect x="3" y="9" width="6" height="1" fill="#000"/><rect x="10" y="9" width="5" height="1" fill="#000"/><rect x="0" y="10" width="7" height="1" fill="#000"/><rect x="8" y="10" width="7" height="1" fill="#000"/><rect x="0" y="11" width="1" height="1" fill="#000"/><rect x="2" y="11" width="3" height="1" fill="#000"/><rect x="10" y="11" width="1" height="1" fill="#000"/><rect x="12" y="11" width="3" height="1" fill="#000"/><rect x="0" y="12" width="1" height="1" fill="#000"/><rect x="2" y="12" width="3" height="1" fill="#000"/><rect x="10" y="12" width="1" height="1" fill="#000"/><rect x="12" y="12" width="3" height="1" fill="#000"/><rect x="0" y="13" width="5" height="1" fill="#000"/><rect x="10" y="13" width="5" height="1" fill="#000"/></svg>
<svg class="a" style="left:244px;top:39px;will-change:transform" width="16" height="16" viewBox="0 0 16 16" shape-rendering="crispEdges"><rect x="2" y="1" width="2" height="1" fill="#000"/><rect x="7" y="1" width="2" height="1" fill="#000"/><rect x="2" y="2" width="2" height="1" fill="#000"/><rect x="7" y="2" width="2" height="1" fill="#000"/><rect x="1" y="3" width="4" height="1" fill="#000"/><rect x="6" y="3" width="4" height="1" fill="#000"/><rect x="1" y="4" width="1" height="1" fill="#000"/><rect x="3" y="4" width="5" height="1" fill="#000"/><rect x="9" y="4" width="2" height="1" fill="#000"/><rect x="0" y="5" width="10" height="1" fill="#000"/><rect x="0" y="6" width="4" height="1" fill="#000"/><rect x="5" y="6" width="1" height="1" fill="#000"/><rect x="7" y="6" width="4" height="1" fill="#000"/><rect x="0" y="7" width="1" height="1" fill="#000"/><rect x="2" y="7" width="2" height="1" fill="#000"/><rect x="7" y="7" width="1" height="1" fill="#000"/><rect x="9" y="7" width="2" height="1" fill="#000"/><rect x="0" y="8" width="4" height="1" fill="#000"/><rect x="7" y="8" width="4" height="1" fill="#000"/><rect x="12" y="11" width="1" height="1" fill="#000"/><rect x="3" y="12" width="1" height="1" fill="#000"/><rect x="5" y="12" width="1" height="1" fill="#000"/><rect x="7" y="12" width="1" height="1" fill="#000"/><rect x="9" y="12" width="5" height="1" fill="#000"/><rect x="12" y="13" width="1" height="1" fill="#000"/><rect x="12" y="12" width="2" height="1" fill="#10106A"/></svg>
<svg class="a" style="left:266px;top:39px;will-change:transform" width="16" height="16" viewBox="0 0 16 16" shape-rendering="crispEdges"><text x="0" y="7" font-family="Liberation Sans" font-size="8" fill="#000">A</text><text x="11" y="15" font-family="Liberation Sans" font-size="8" fill="#808080">B</text><rect x="2" y="9" width="1" height="1" fill="#000"/><rect x="3" y="11" width="1" height="1" fill="#000"/><rect x="5" y="12" width="1" height="1" fill="#000"/><rect x="7" y="12" width="1" height="1" fill="#000"/><rect x="8" y="6" width="1" height="1" fill="#000"/><rect x="8" y="8" width="1" height="1" fill="#000"/><rect x="9" y="4" width="1" height="1" fill="#000"/><rect x="9" y="10" width="1" height="1" fill="#000"/><path d="M8 11 L11 12.5 L8 14 Z" fill="#000"/><rect x="10" y="1" width="3" height="1" fill="#000"/><rect x="12" y="1" width="1" height="3" fill="#000"/></svg>
<div class="a" style="left:0;top:57px;width:337px;height:648px;background:#F0F0F0"></div>
<div id="editor" class="a"><div id="gutline" class="a"></div><div id="nums" class="a code">1
2
3
4
5
6
7
8
9
10
11
12
13
14
15
16
17
18
19
20
21
22
23
24
25
26
27
28
29
30
31
32
33
34
35
36
37
38
39
40</div><div id="lines" class="a code">if x=1 then begin
begin
end;
s1;
  if xx=1 then begin
    s11;
  end else begin
    s12;
  end;
end else begin
s2;
end;


sdf;
wirte(&#x27;&#x27;for x:=1 to 20 do dfsd; &#x27;
//for x:=1 to 33 do
dfsdf;
for x:=1 to 4354 do begin
while x&lt;3 do sdfsdf;
while x&lt;4 do begin
repeat
fsd;
  if x=1 then begin
    if y=1 then begin
      test;
      if z=1 then begin
        testt;
      end else test3;
    end else begin
      if u=1 then begin
dd;
end else dd;
end;
  end else begin
    if y=1 then begin
      test;
      if z=2 then begin
        ttest2;
      end;</div></div>
<div class="a track" style="left:337px;top:57px;width:16px;height:647px"></div>
<div class="a sbtn" style="left:337px;top:57px"><svg class="a" style="left:4px;top:6px;will-change:transform" width="7" height="4" viewBox="0 0 7 4" shape-rendering="crispEdges"><path d="M3.5 0 L7 4 H0 Z" fill="#000" shape-rendering="crispEdges"/><rect x="3" y="0" width="1" height="1" fill="#000"/><rect x="2" y="1" width="3" height="1" fill="#000"/><rect x="1" y="2" width="5" height="1" fill="#000"/><rect x="0" y="3" width="7" height="1" fill="#000"/></svg></div>
<div class="a sbtn" style="left:337px;top:73px"></div>
<div class="a sbtn" style="left:337px;top:689px"><svg class="a" style="left:4px;top:6px;will-change:transform" width="7" height="4" viewBox="0 0 7 4" shape-rendering="crispEdges"><rect x="0" y="0" width="7" height="1" fill="#000"/><rect x="1" y="1" width="5" height="1" fill="#000"/><rect x="2" y="2" width="3" height="1" fill="#000"/><rect x="3" y="3" width="1" height="1" fill="#000"/></svg></div>
<div class="a track" style="left:0;top:705px;width:337px;height:16px"></div>
<div class="a sbtn" style="left:0px;top:705px"><svg class="a" style="left:6px;top:4px;will-change:transform" width="4" height="7" viewBox="0 0 4 7" shape-rendering="crispEdges"><rect x="3" y="0" width="1" height="7" fill="#000"/><rect x="2" y="1" width="1" height="5" fill="#000"/><rect x="1" y="2" width="1" height="3" fill="#000"/><rect x="0" y="3" width="1" height="1" fill="#000"/></svg></div>
<div class="a sbtn" style="left:16px;top:705px"></div>
<div class="a sbtn" style="left:321px;top:705px"><svg class="a" style="left:6px;top:4px;will-change:transform" width="4" height="7" viewBox="0 0 4 7" shape-rendering="crispEdges"><rect x="0" y="0" width="1" height="7" fill="#000"/><rect x="1" y="1" width="1" height="5" fill="#000"/><rect x="2" y="2" width="1" height="3" fill="#000"/><rect x="3" y="3" width="1" height="1" fill="#000"/></svg></div>
<div class="a" style="left:364px;top:59px;width:145px;height:25px;background:#D4D0C8;box-shadow:inset -1px -1px #404040,inset 1px 1px #fff,inset -2px -2px #808080"></div>
<svg class="a" style="left:382px;top:60px;will-change:transform" width="22" height="22" viewBox="0 0 22 22" shape-rendering="crispEdges"><path d="M3 11.5 L4.5 9.5 L8.5 13 L17.5 3 L19.5 8 L9 20.5 L3 13.5 Z" fill="#20A020" stroke="#003000" stroke-width="1" shape-rendering="auto"/><path d="M4.5 10.5 L8.5 14 L17.5 4" fill="none" stroke="#80F080" stroke-width="1.2" shape-rendering="auto"/><path d="M5 14 L9 17.5 L18.5 6.5" fill="none" stroke="#50D050" stroke-width="1" shape-rendering="auto"/></svg>
<div class="a lbl" style="left:406.5px;top:66px;letter-spacing:-0.073px">Render flowchart</div>
<div class="a" style="left:516px;top:67px;width:13px;height:13px;background:#fff;box-shadow:inset 1px 1px #808080,inset -1px -1px #fff,inset 2px 2px #404040,inset -2px -2px #D4D0C8"></div>
<div class="a lbl" style="left:534.0px;top:66px;letter-spacing:-0.2px">Only selected lines</div>
<div class="a" style="left:356px;top:108px;width:668px;height:613px;background:#D4D0C8;box-shadow:inset 1px 1px #fff,inset -1px -1px #404040,inset -2px -2px #808080"></div>
<div class="a" style="left:475px;top:89px;width:70px;height:19px;background:#D4D0C8;border-top:1px solid #fff;border-left:1px solid #fff;border-right:1px solid #404040;box-shadow:inset -1px 0 #808080"></div>
<svg class="a" style="left:478px;top:91px;will-change:transform" width="16" height="16" viewBox="0 0 16 16" shape-rendering="crispEdges"><rect x="5" y="0" width="6" height="1" fill="#000"/><rect x="3" y="1" width="6" height="1" fill="#000"/><rect x="13" y="1" width="1" height="1" fill="#000"/><rect x="2" y="2" width="6" height="1" fill="#000"/><rect x="13" y="2" width="1" height="1" fill="#000"/><rect x="1" y="3" width="1" height="1" fill="#000"/><rect x="3" y="3" width="2" height="1" fill="#000"/><rect x="6" y="3" width="3" height="1" fill="#000"/><rect x="13" y="3" width="1" height="1" fill="#000"/><rect x="2" y="4" width="1" height="1" fill="#000"/><rect x="4" y="4" width="1" height="1" fill="#000"/><rect x="7" y="4" width="1" height="1" fill="#C8C070"/><rect x="8" y="4" width="1" height="1" fill="#000"/><rect x="13" y="4" width="1" height="1" fill="#000"/><rect x="3" y="5" width="2" height="1" fill="#000"/><rect x="6" y="5" width="2" height="1" fill="#C8C070"/><rect x="8" y="5" width="1" height="1" fill="#000"/><rect x="9" y="5" width="1" height="1" fill="#C8C070"/><rect x="13" y="5" width="1" height="1" fill="#000"/><rect x="6" y="6" width="1" height="1" fill="#000"/><rect x="7" y="6" width="3" height="1" fill="#C8C070"/><rect x="13" y="6" width="1" height="1" fill="#000"/><rect x="7" y="7" width="1" height="1" fill="#000"/><rect x="8" y="7" width="3" height="1" fill="#C8C070"/><rect x="13" y="7" width="1" height="1" fill="#000"/><rect x="3" y="8" width="3" height="1" fill="#000"/><rect x="8" y="8" width="1" height="1" fill="#000"/><rect x="9" y="8" width="2" height="1" fill="#C8C070"/><rect x="13" y="8" width="1" height="1" fill="#000"/><rect x="2" y="9" width="1" height="1" fill="#000"/><rect x="5" y="9" width="1" height="1" fill="#000"/><rect x="9" y="9" width="1" height="1" fill="#000"/><rect x="10" y="9" width="4" height="1" fill="#C82020"/><rect x="1" y="10" width="1" height="1" fill="#000"/><rect x="4" y="10" width="1" height="1" fill="#000"/><rect x="6" y="10" width="1" height="1" fill="#000"/><rect x="10" y="10" width="5" height="1" fill="#C82020"/><rect x="1" y="11" width="1" height="1" fill="#000"/><rect x="3" y="11" width="1" height="1" fill="#000"/><rect x="6" y="11" width="1" height="1" fill="#000"/><rect x="10" y="11" width="5" height="1" fill="#C82020"/><rect x="1" y="12" width="2" height="1" fill="#000"/><rect x="6" y="12" width="1" height="1" fill="#000"/><rect x="11" y="12" width="3" height="1" fill="#C82020"/><rect x="2" y="13" width="1" height="1" fill="#000"/><rect x="8" y="13" width="1" height="1" fill="#000"/><rect x="11" y="13" width="3" height="1" fill="#C82020"/><rect x="3" y="14" width="3" height="1" fill="#000"/><rect x="8" y="14" width="2" height="1" fill="#000"/><rect x="11" y="14" width="3" height="1" fill="#C82020"/><rect x="10" y="15" width="1" height="1" fill="#000"/><rect x="11" y="15" width="3" height="1" fill="#C82020"/></svg>
<div class="a lbl" style="left:501.0px;top:94px;letter-spacing:-0.129px">Settings</div>
<div class="a" style="left:356px;top:87px;width:119px;height:23px;background:#D4D0C8;border-top:1px solid #fff;border-left:1px solid #fff;border-right:1px solid #404040;box-shadow:inset -1px 0 #808080"></div>
<svg class="a" style="left:363px;top:88px;will-change:transform" width="18" height="18" viewBox="0 0 18 18" shape-rendering="crispEdges"><rect x="6" y="2" width="10" height="15" fill="#fff"/><rect x="0" y="0" width="5" height="1" fill="#50D8C8"/><rect x="0" y="1" width="4" height="1" fill="#50D8C8"/><rect x="5" y="1" width="11" height="1" fill="#000"/><rect x="0" y="2" width="3" height="1" fill="#50D8C8"/><rect x="4" y="2" width="1" height="1" fill="#000"/><rect x="5" y="2" width="3" height="1" fill="#F0F090"/><rect x="8" y="2" width="1" height="1" fill="#000"/><rect x="12" y="2" width="1" height="1" fill="#000"/><rect x="14" y="2" width="1" height="1" fill="#fff"/><rect x="15" y="2" width="2" height="1" fill="#000"/><rect x="0" y="3" width="2" height="1" fill="#50D8C8"/><rect x="3" y="3" width="1" height="1" fill="#000"/><rect x="4" y="3" width="5" height="1" fill="#F0F090"/><rect x="9" y="3" width="1" height="1" fill="#000"/><rect x="11" y="3" width="1" height="1" fill="#000"/><rect x="14" y="3" width="2" height="1" fill="#fff"/><rect x="16" y="3" width="1" height="1" fill="#000"/><rect x="0" y="4" width="1" height="1" fill="#50D8C8"/><rect x="2" y="4" width="1" height="1" fill="#000"/><rect x="3" y="4" width="6" height="1" fill="#F0F090"/><rect x="9" y="4" width="2" height="1" fill="#000"/><rect x="16" y="4" width="2" height="1" fill="#000"/><rect x="2" y="5" width="1" height="1" fill="#000"/><rect x="3" y="5" width="6" height="1" fill="#F0F090"/><rect x="10" y="5" width="1" height="1" fill="#000"/><rect x="17" y="5" width="1" height="1" fill="#000"/><rect x="2" y="6" width="1" height="1" fill="#000"/><rect x="3" y="6" width="4" height="1" fill="#F0F090"/><rect x="7" y="6" width="1" height="1" fill="#000"/><rect x="9" y="6" width="1" height="1" fill="#000"/><rect x="11" y="6" width="1" height="1" fill="#000"/><rect x="17" y="6" width="1" height="1" fill="#000"/><rect x="3" y="7" width="1" height="1" fill="#000"/><rect x="4" y="7" width="2" height="1" fill="#F0F090"/><rect x="6" y="7" width="1" height="1" fill="#000"/><rect x="8" y="7" width="1" height="1" fill="#000"/><rect x="10" y="7" width="1" height="1" fill="#000"/><rect x="12" y="7" width="1" height="1" fill="#000"/><rect x="17" y="7" width="1" height="1" fill="#000"/><rect x="4" y="8" width="1" height="1" fill="#000"/><rect x="5" y="8" width="2" height="1" fill="#F0F090"/><rect x="7" y="8" width="1" height="1" fill="#000"/><rect x="9" y="8" width="1" height="1" fill="#000"/><rect x="11" y="8" width="1" height="1" fill="#000"/><rect x="14" y="8" width="1" height="1" fill="#000"/><rect x="17" y="8" width="1" height="1" fill="#000"/><rect x="5" y="9" width="1" height="1" fill="#000"/><rect x="8" y="9" width="1" height="1" fill="#000"/><rect x="10" y="9" width="1" height="1" fill="#000"/><rect x="17" y="9" width="1" height="1" fill="#000"/><rect x="5" y="10" width="1" height="1" fill="#000"/><rect x="10" y="10" width="2" height="1" fill="#000"/><rect x="14" y="10" width="1" height="1" fill="#000"/><rect x="17" y="10" width="1" height="1" fill="#000"/><rect x="5" y="11" width="1" height="1" fill="#000"/><rect x="17" y="11" width="1" height="1" fill="#000"/><rect x="5" y="12" width="1" height="1" fill="#000"/><rect x="7" y="12" width="3" height="1" fill="#000"/><rect x="11" y="12" width="2" height="1" fill="#000"/><rect x="14" y="12" width="2" height="1" fill="#000"/><rect x="17" y="12" width="1" height="1" fill="#000"/><rect x="5" y="13" width="1" height="1" fill="#000"/><rect x="17" y="13" width="1" height="1" fill="#000"/><rect x="5" y="14" width="1" height="1" fill="#000"/><rect x="7" y="14" width="3" height="1" fill="#000"/><rect x="11" y="14" width="1" height="1" fill="#000"/><rect x="13" y="14" width="2" height="1" fill="#000"/><rect x="17" y="14" width="1" height="1" fill="#000"/><rect x="5" y="15" width="1" height="1" fill="#000"/><rect x="17" y="15" width="1" height="1" fill="#000"/><rect x="5" y="16" width="13" height="1" fill="#000"/></svg>
<div class="a lbl" style="left:386.0px;top:92px;letter-spacing:-0.133px">Render flowchart</div>
<div class="a" style="left:360px;top:112px;width:660px;height:605px;box-shadow:inset 1px 1px #808080,inset -1px -1px #fff,inset 2px 2px #404040,inset -2px -2px #D4D0C8"></div>
<svg class="a" style="left:0;top:0;will-change:transform" width="1024" height="744"><defs><clipPath id="fcclip"><rect x="362" y="114" width="640" height="585"/></clipPath></defs><g clip-path="url(#fcclip)" shape-rendering="crispEdges" font-family="Liberation Sans" font-size="13.4" fill="#000"><rect x="362" y="114" width="640" height="585" fill="#fff"/><rect x="762.5" y="100.5" width="32" height="48" fill="#FFFDC8" stroke="#000"/><text x="767" y="124">fsd;</text><path d="M778.5,148.5 L778.5,165.5" fill="none" stroke="#000" stroke-width="1"/><rect x="777" y="164" width="1" height="1"/><rect x="779" y="164" width="1" height="1"/><rect x="776" y="163" width="1" height="1"/><rect x="780" y="163" width="1" height="1"/><rect x="775" y="162" width="1" height="1"/><rect x="781" y="162" width="1" height="1"/><rect x="774" y="161" width="1" height="1"/><rect x="782" y="161" width="1" height="1"/><rect x="773" y="160" width="1" height="1"/><rect x="783" y="160" width="1" height="1"/><path d="M746.5,165.5 L811.5,165.5 L817.5,171.5 L817.5,187.5 L811.5,193.5 L746.5,193.5 L740.5,187.5 L740.5,171.5Z" fill="#FCC8C8" stroke="#000"/><text x="746" y="184">if x=1 then</text><path d="M740.5,179.5 L566.5,179.5 L566.5,209.5" fill="none" stroke="#000" stroke-width="1"/><rect x="565" y="208" width="1" height="1"/><rect x="567" y="208" width="1" height="1"/><rect x="564" y="207" width="1" height="1"/><rect x="568" y="207" width="1" height="1"/><rect x="563" y="206" width="1" height="1"/><rect x="569" y="206" width="1" height="1"/><rect x="562" y="205" width="1" height="1"/><rect x="570" y="205" width="1" height="1"/><rect x="561" y="204" width="1" height="1"/><rect x="571" y="204" width="1" height="1"/><path d="M817.5,179.5 L990.5,179.5 L990.5,209.5" fill="none" stroke="#000" stroke-width="1"/><rect x="989" y="208" width="1" height="1"/><rect x="991" y="208" width="1" height="1"/><rect x="988" y="207" width="1" height="1"/><rect x="992" y="207" width="1" height="1"/><rect x="987" y="206" width="1" height="1"/><rect x="993" y="206" width="1" height="1"/><rect x="986" y="205" width="1" height="1"/><rect x="994" y="205" width="1" height="1"/><rect x="985" y="204" width="1" height="1"/><rect x="995" y="204" width="1" height="1"/><rect x="545.5" y="209.5" width="42" height="43" fill="#FFFDC8" stroke="#000"/><text x="552" y="228">begin</text><path d="M566.5,252.5 L566.5,269.5" fill="none" stroke="#000" stroke-width="1"/><rect x="565" y="268" width="1" height="1"/><rect x="567" y="268" width="1" height="1"/><rect x="564" y="267" width="1" height="1"/><rect x="568" y="267" width="1" height="1"/><rect x="563" y="266" width="1" height="1"/><rect x="569" y="266" width="1" height="1"/><rect x="562" y="265" width="1" height="1"/><rect x="570" y="265" width="1" height="1"/><rect x="561" y="264" width="1" height="1"/><rect x="571" y="264" width="1" height="1"/><path d="M534.5,269.5 L599.5,269.5 L605.5,275.5 L605.5,291.5 L599.5,297.5 L534.5,297.5 L528.5,291.5 L528.5,275.5Z" fill="#FCC8C8" stroke="#000"/><text x="534" y="288">if y=1 then</text><path d="M528.5,283.5 L466.5,283.5 L466.5,313.5" fill="none" stroke="#000" stroke-width="1"/><rect x="465" y="312" width="1" height="1"/><rect x="467" y="312" width="1" height="1"/><rect x="464" y="311" width="1" height="1"/><rect x="468" y="311" width="1" height="1"/><rect x="463" y="310" width="1" height="1"/><rect x="469" y="310" width="1" height="1"/><rect x="462" y="309" width="1" height="1"/><rect x="470" y="309" width="1" height="1"/><rect x="461" y="308" width="1" height="1"/><rect x="471" y="308" width="1" height="1"/><path d="M605.5,283.5 L666.5,283.5 L666.5,313.5" fill="none" stroke="#000" stroke-width="1"/><rect x="665" y="312" width="1" height="1"/><rect x="667" y="312" width="1" height="1"/><rect x="664" y="311" width="1" height="1"/><rect x="668" y="311" width="1" height="1"/><rect x="663" y="310" width="1" height="1"/><rect x="669" y="310" width="1" height="1"/><rect x="662" y="309" width="1" height="1"/><rect x="670" y="309" width="1" height="1"/><rect x="661" y="308" width="1" height="1"/><rect x="671" y="308" width="1" height="1"/><rect x="435.5" y="313.5" width="61" height="59" fill="#FFFDC8" stroke="#000"/><text x="441" y="332">begin</text><text x="465" y="348">test;</text><rect x="645.5" y="313.5" width="42" height="43" fill="#FFFDC8" stroke="#000"/><text x="651" y="332">begin</text><path d="M466.5,372.5 L466.5,389.5" fill="none" stroke="#000" stroke-width="1"/><rect x="465" y="388" width="1" height="1"/><rect x="467" y="388" width="1" height="1"/><rect x="464" y="387" width="1" height="1"/><rect x="468" y="387" width="1" height="1"/><rect x="463" y="386" width="1" height="1"/><rect x="469" y="386" width="1" height="1"/><rect x="462" y="385" width="1" height="1"/><rect x="470" y="385" width="1" height="1"/><rect x="461" y="384" width="1" height="1"/><rect x="471" y="384" width="1" height="1"/><path d="M434.5,389.5 L500.5,389.5 L506.5,395.5 L506.5,411.5 L500.5,417.5 L434.5,417.5 L428.5,411.5 L428.5,395.5Z" fill="#FCC8C8" stroke="#000"/><text x="434" y="407">if z=1 then</text><path d="M428.5,403.5 L422.5,403.5 L422.5,433.5" fill="none" stroke="#000" stroke-width="1"/><rect x="421" y="432" width="1" height="1"/><rect x="423" y="432" width="1" height="1"/><rect x="420" y="431" width="1" height="1"/><rect x="424" y="431" width="1" height="1"/><rect x="419" y="430" width="1" height="1"/><rect x="425" y="430" width="1" height="1"/><rect x="418" y="429" width="1" height="1"/><rect x="426" y="429" width="1" height="1"/><rect x="417" y="428" width="1" height="1"/><rect x="427" y="428" width="1" height="1"/><path d="M506.5,403.5 L511.5,403.5 L511.5,433.5" fill="none" stroke="#000" stroke-width="1"/><rect x="510" y="432" width="1" height="1"/><rect x="512" y="432" width="1" height="1"/><rect x="509" y="431" width="1" height="1"/><rect x="513" y="431" width="1" height="1"/><rect x="508" y="430" width="1" height="1"/><rect x="514" y="430" width="1" height="1"/><rect x="507" y="429" width="1" height="1"/><rect x="515" y="429" width="1" height="1"/><rect x="506" y="428" width="1" height="1"/><rect x="516" y="428" width="1" height="1"/><rect x="378.5" y="433.5" width="88" height="59" fill="#FFFDC8" stroke="#000"/><text x="384" y="452">begin</text><text x="416" y="468">testt;</text><text x="408" y="484">end else</text><rect x="488.5" y="433.5" width="44" height="43" fill="#FFFDC8" stroke="#000"/><text x="494" y="452">test3;</text><path d="M422.5,492.5 L422.5,501.5 L511.5,501.5 L511.5,476.5" fill="none" stroke="#000" stroke-width="1"/><path d="M466.5,501.5 L466.5,509.5" fill="none" stroke="#000" stroke-width="1"/><rect x="465" y="508" width="1" height="1"/><rect x="467" y="508" width="1" height="1"/><rect x="464" y="507" width="1" height="1"/><rect x="468" y="507" width="1" height="1"/><rect x="463" y="506" width="1" height="1"/><rect x="469" y="506" width="1" height="1"/><rect x="462" y="505" width="1" height="1"/><rect x="470" y="505" width="1" height="1"/><rect x="461" y="504" width="1" height="1"/><rect x="471" y="504" width="1" height="1"/><rect x="426.5" y="509.5" width="80" height="28" fill="#FFFDC8" stroke="#000"/><text x="448" y="528">end else</text><path d="M466.5,537.5 L466.5,545.5 L666.5,545.5 L666.5,536.5" fill="none" stroke="#000" stroke-width="1"/><path d="M566.5,545.5 L566.5,553.5" fill="none" stroke="#000" stroke-width="1"/><rect x="565" y="552" width="1" height="1"/><rect x="567" y="552" width="1" height="1"/><rect x="564" y="551" width="1" height="1"/><rect x="568" y="551" width="1" height="1"/><rect x="563" y="550" width="1" height="1"/><rect x="569" y="550" width="1" height="1"/><rect x="562" y="549" width="1" height="1"/><rect x="570" y="549" width="1" height="1"/><rect x="561" y="548" width="1" height="1"/><rect x="571" y="548" width="1" height="1"/><path d="M666.5,356.5 L666.5,373.5" fill="none" stroke="#000" stroke-width="1"/><rect x="665" y="372" width="1" height="1"/><rect x="667" y="372" width="1" height="1"/><rect x="664" y="371" width="1" height="1"/><rect x="668" y="371" width="1" height="1"/><rect x="663" y="370" width="1" height="1"/><rect x="669" y="370" width="1" height="1"/><rect x="662" y="369" width="1" height="1"/><rect x="670" y="369" width="1" height="1"/><rect x="661" y="368" width="1" height="1"/><rect x="671" y="368" width="1" height="1"/><path d="M634.5,373.5 L700.5,373.5 L706.5,379.5 L706.5,395.5 L700.5,401.5 L634.5,401.5 L628.5,395.5 L628.5,379.5Z" fill="#FCC8C8" stroke="#000"/><text x="634" y="391">if u=1 then</text><path d="M628.5,387.5 L623.5,387.5 L623.5,417.5" fill="none" stroke="#000" stroke-width="1"/><rect x="622" y="416" width="1" height="1"/><rect x="624" y="416" width="1" height="1"/><rect x="621" y="415" width="1" height="1"/><rect x="625" y="415" width="1" height="1"/><rect x="620" y="414" width="1" height="1"/><rect x="626" y="414" width="1" height="1"/><rect x="619" y="413" width="1" height="1"/><rect x="627" y="413" width="1" height="1"/><rect x="618" y="412" width="1" height="1"/><rect x="628" y="412" width="1" height="1"/><path d="M706.5,387.5 L711.5,387.5 L711.5,417.5" fill="none" stroke="#000" stroke-width="1"/><rect x="710" y="416" width="1" height="1"/><rect x="712" y="416" width="1" height="1"/><rect x="709" y="415" width="1" height="1"/><rect x="713" y="415" width="1" height="1"/><rect x="708" y="414" width="1" height="1"/><rect x="714" y="414" width="1" height="1"/><rect x="707" y="413" width="1" height="1"/><rect x="715" y="413" width="1" height="1"/><rect x="706" y="412" width="1" height="1"/><rect x="716" y="412" width="1" height="1"/><rect x="590.5" y="417.5" width="64" height="59" fill="#FFFDC8" stroke="#000"/><text x="597" y="436">begin</text><text x="597" y="452">dd;</text><text x="597" y="468">end else</text><rect x="696.5" y="417.5" width="29" height="43" fill="#FFFDC8" stroke="#000"/><text x="702" y="436">dd;</text><path d="M623.5,476.5 L623.5,485.5 L711.5,485.5 L711.5,460.5" fill="none" stroke="#000" stroke-width="1"/><path d="M666.5,485.5 L666.5,493.5" fill="none" stroke="#000" stroke-width="1"/><rect x="665" y="492" width="1" height="1"/><rect x="667" y="492" width="1" height="1"/><rect x="664" y="491" width="1" height="1"/><rect x="668" y="491" width="1" height="1"/><rect x="663" y="490" width="1" height="1"/><rect x="669" y="490" width="1" height="1"/><rect x="662" y="489" width="1" height="1"/><rect x="670" y="489" width="1" height="1"/><rect x="661" y="488" width="1" height="1"/><rect x="671" y="488" width="1" height="1"/><rect x="648.5" y="493.5" width="36" height="43" fill="#FFFDC8" stroke="#000"/><text x="654" y="512">end;</text><rect x="530.5" y="553.5" width="72" height="27" fill="#FFFDC8" stroke="#000"/><text x="544" y="572">end else</text><path d="M566.5,580.5 L566.5,637.5 L990.5,637.5 L990.5,628.5" fill="none" stroke="#000" stroke-width="1"/><path d="M778.5,637.5 L778.5,645.5" fill="none" stroke="#000" stroke-width="1"/><rect x="777" y="644" width="1" height="1"/><rect x="779" y="644" width="1" height="1"/><rect x="776" y="643" width="1" height="1"/><rect x="780" y="643" width="1" height="1"/><rect x="775" y="642" width="1" height="1"/><rect x="781" y="642" width="1" height="1"/><rect x="774" y="641" width="1" height="1"/><rect x="782" y="641" width="1" height="1"/><rect x="773" y="640" width="1" height="1"/><rect x="783" y="640" width="1" height="1"/><rect x="745.5" y="645.5" width="65" height="43" fill="#FFFDC8" stroke="#000"/><text x="751" y="664">until x=1;</text><path d="M362.5,667.5 L745.5,667.5" fill="none" stroke="#000" stroke-width="1"/><path d="M778.5,688.5 L778.5,700.5" fill="none" stroke="#000" stroke-width="1"/><rect x="969.5" y="209.5" width="71" height="43" fill="#FFFDC8" stroke="#000"/><text x="976" y="228">begin</text><path d="M990.5,252.5 L990.5,269.5" fill="none" stroke="#000" stroke-width="1"/><rect x="989" y="268" width="1" height="1"/><rect x="991" y="268" width="1" height="1"/><rect x="988" y="267" width="1" height="1"/><rect x="992" y="267" width="1" height="1"/><rect x="987" y="266" width="1" height="1"/><rect x="993" y="266" width="1" height="1"/><rect x="986" y="265" width="1" height="1"/><rect x="994" y="265" width="1" height="1"/><rect x="985" y="264" width="1" height="1"/><rect x="995" y="264" width="1" height="1"/><path d="M958.5,269.5 L1054.5,269.5 L1060.5,275.5 L1060.5,291.5 L1054.5,297.5 L958.5,297.5 L952.5,291.5 L952.5,275.5Z" fill="#FCC8C8" stroke="#000"/><text x="959" y="288">if y=1 then</text><path d="M990.5,297.5 L990.5,313.5" fill="none" stroke="#000" stroke-width="1"/><rect x="989" y="312" width="1" height="1"/><rect x="991" y="312" width="1" height="1"/><rect x="988" y="311" width="1" height="1"/><rect x="992" y="311" width="1" height="1"/><rect x="987" y="310" width="1" height="1"/><rect x="993" y="310" width="1" height="1"/><rect x="986" y="309" width="1" height="1"/><rect x="994" y="309" width="1" height="1"/><rect x="985" y="308" width="1" height="1"/><rect x="995" y="308" width="1" height="1"/><rect x="961.5" y="313.5" width="79" height="59" fill="#FFFDC8" stroke="#000"/><text x="967" y="332">begin</text><text x="990" y="348">test;</text><path d="M990.5,372.5 L990.5,389.5" fill="none" stroke="#000" stroke-width="1"/><rect x="989" y="388" width="1" height="1"/><rect x="991" y="388" width="1" height="1"/><rect x="988" y="387" width="1" height="1"/><rect x="992" y="387" width="1" height="1"/><rect x="987" y="386" width="1" height="1"/><rect x="993" y="386" width="1" height="1"/><rect x="986" y="385" width="1" height="1"/><rect x="994" y="385" width="1" height="1"/><rect x="985" y="384" width="1" height="1"/><rect x="995" y="384" width="1" height="1"/><path d="M958.5,389.5 L1054.5,389.5 L1060.5,395.5 L1060.5,411.5 L1054.5,417.5 L958.5,417.5 L952.5,411.5 L952.5,395.5Z" fill="#FCC8C8" stroke="#000"/><text x="959" y="407">if z=2 then</text><path d="M990.5,417.5 L990.5,433.5" fill="none" stroke="#000" stroke-width="1"/><rect x="989" y="432" width="1" height="1"/><rect x="991" y="432" width="1" height="1"/><rect x="988" y="431" width="1" height="1"/><rect x="992" y="431" width="1" height="1"/><rect x="987" y="430" width="1" height="1"/><rect x="993" y="430" width="1" height="1"/><rect x="986" y="429" width="1" height="1"/><rect x="994" y="429" width="1" height="1"/><rect x="985" y="428" width="1" height="1"/><rect x="995" y="428" width="1" height="1"/><rect x="950.5" y="433.5" width="90" height="75" fill="#FFFDC8" stroke="#000"/><text x="957" y="452">begin</text><text x="988" y="468">ttest2;</text><text x="981" y="484">end;</text><path d="M990.5,508.5 L990.5,525.5" fill="none" stroke="#000" stroke-width="1"/><rect x="989" y="524" width="1" height="1"/><rect x="991" y="524" width="1" height="1"/><rect x="988" y="523" width="1" height="1"/><rect x="992" y="523" width="1" height="1"/><rect x="987" y="522" width="1" height="1"/><rect x="993" y="522" width="1" height="1"/><rect x="986" y="521" width="1" height="1"/><rect x="994" y="521" width="1" height="1"/><rect x="985" y="520" width="1" height="1"/><rect x="995" y="520" width="1" height="1"/><rect x="964.5" y="525.5" width="76" height="43" fill="#FFFDC8" stroke="#000"/><text x="987" y="544">end;</text><path d="M990.5,568.5 L990.5,585.5" fill="none" stroke="#000" stroke-width="1"/><rect x="989" y="584" width="1" height="1"/><rect x="991" y="584" width="1" height="1"/><rect x="988" y="583" width="1" height="1"/><rect x="992" y="583" width="1" height="1"/><rect x="987" y="582" width="1" height="1"/><rect x="993" y="582" width="1" height="1"/><rect x="986" y="581" width="1" height="1"/><rect x="994" y="581" width="1" height="1"/><rect x="985" y="580" width="1" height="1"/><rect x="995" y="580" width="1" height="1"/><rect x="968.5" y="585.5" width="72" height="43" fill="#FFFDC8" stroke="#000"/><text x="982" y="604">end;</text></g></svg>
<div class="a track" style="left:1002px;top:114px;width:16px;height:585px"></div>
<div class="a sbtn" style="left:1002px;top:114px"><svg class="a" style="left:4px;top:6px;will-change:transform" width="7" height="4" viewBox="0 0 7 4" shape-rendering="crispEdges"><path d="M3.5 0 L7 4 H0 Z" fill="#000" shape-rendering="crispEdges"/><rect x="3" y="0" width="1" height="1" fill="#000"/><rect x="2" y="1" width="3" height="1" fill="#000"/><rect x="1" y="2" width="5" height="1" fill="#000"/><rect x="0" y="3" width="7" height="1" fill="#000"/></svg></div>
<div class="a sbtn" style="left:1002px;top:399px;height:166px"></div>
<div class="a sbtn" style="left:1002px;top:683px"><svg class="a" style="left:4px;top:6px;will-change:transform" width="7" height="4" viewBox="0 0 7 4" shape-rendering="crispEdges"><rect x="0" y="0" width="7" height="1" fill="#000"/><rect x="1" y="1" width="5" height="1" fill="#000"/><rect x="2" y="2" width="3" height="1" fill="#000"/><rect x="3" y="3" width="1" height="1" fill="#000"/></svg></div>
<div class="a track" style="left:362px;top:699px;width:640px;height:16px"></div>
<div class="a sbtn" style="left:362px;top:699px"><svg class="a" style="left:6px;top:4px;will-change:transform" width="4" height="7" viewBox="0 0 4 7" shape-rendering="crispEdges"><rect x="3" y="0" width="1" height="7" fill="#000"/><rect x="2" y="1" width="1" height="5" fill="#000"/><rect x="1" y="2" width="1" height="3" fill="#000"/><rect x="0" y="3" width="1" height="1" fill="#000"/></svg></div>
<div class="a sbtn" style="left:445px;top:699px;width:368px"></div>
<div class="a sbtn" style="left:986px;top:699px"><svg class="a" style="left:6px;top:4px;will-change:transform" width="4" height="7" viewBox="0 0 4 7" shape-rendering="crispEdges"><rect x="0" y="0" width="1" height="7" fill="#000"/><rect x="1" y="1" width="1" height="5" fill="#000"/><rect x="2" y="2" width="1" height="3" fill="#000"/><rect x="3" y="3" width="1" height="1" fill="#000"/></svg></div>
<div class="a" style="left:1002px;top:699px;width:16px;height:16px;background:#D4D0C8"></div>
<div id="status" class="a"></div>
</body></html>
